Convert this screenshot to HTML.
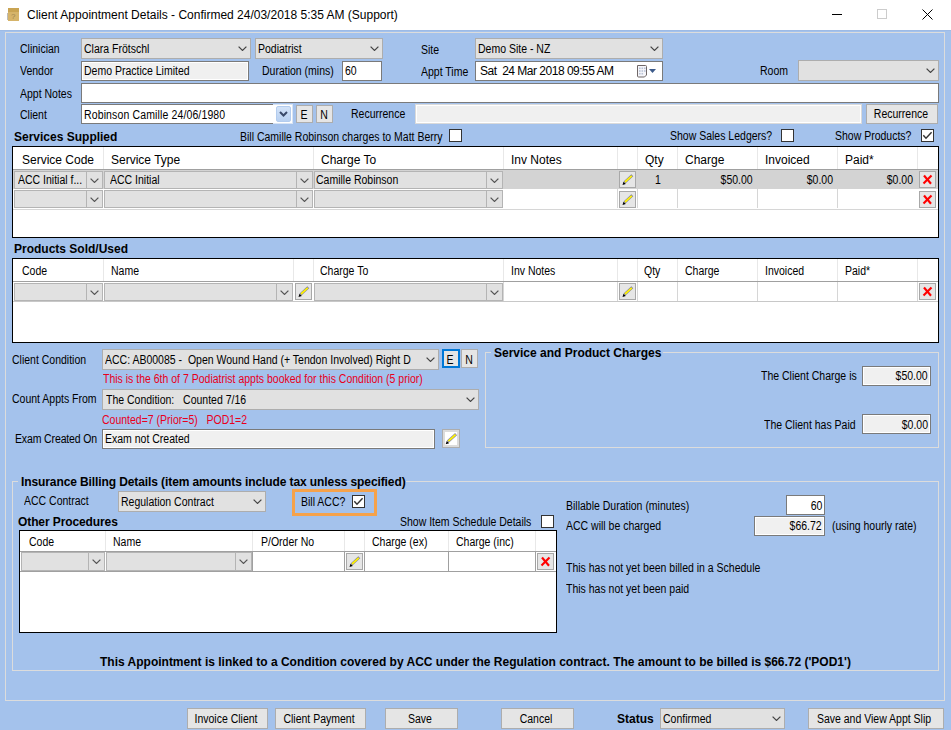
<!DOCTYPE html>
<html><head><meta charset="utf-8"><style>
html,body{margin:0;padding:0;width:951px;height:730px;overflow:hidden;background:#A4C2EC}
.a{position:absolute}
.t{position:absolute;white-space:pre;font-family:"Liberation Sans",sans-serif;font-size:12px;line-height:12px;color:#000}
.r{transform:scaleX(0.875);transform-origin:0 0}
.rr{transform:scaleX(0.875);transform-origin:100% 0}
.rc{transform:scaleX(0.875);transform-origin:50% 0}
.h{letter-spacing:0}
.ti{letter-spacing:0;color:#000}
.dt{letter-spacing:-0.5px}
.b{font-weight:bold;letter-spacing:0}
</style></head><body>
<div class="a" style="left:0px;top:0px;width:951px;height:30px;background:#fff"></div>
<svg class="a" style="left:7px;top:7px" width="14" height="15" viewBox="0 0 14 15"><rect x="1" y="2" width="11" height="12" fill="#D6B46A"/><rect x="1" y="1" width="11" height="4" fill="#C9A453"/><rect x="0" y="6" width="1" height="7" fill="#bbb"/><text x="4" y="12" font-size="8" fill="#9c8550" font-family="Liberation Sans">?</text></svg>
<div class="t ti" style="left:27px;top:9px;">Client Appointment Details - Confirmed 24/03/2018 5:35 AM (Support)</div>
<div class="a" style="left:832px;top:14px;width:10px;height:1px;background:#000"></div>
<div class="a" style="left:877px;top:9px;width:10px;height:10px;border:1px solid #ccc;box-sizing:border-box"></div>
<svg class="a" style="left:922px;top:9px" width="11" height="11" viewBox="0 0 11 11"><line x1="0.5" y1="0.5" x2="10.5" y2="10.5" stroke="#000" stroke-width="1"/><line x1="10.5" y1="0.5" x2="0.5" y2="10.5" stroke="#000" stroke-width="1"/></svg>
<div class="a" style="left:0px;top:30px;width:951px;height:700px;background:#A4C2EC"></div>
<div class="a" style="left:0px;top:30px;width:951px;height:1px;background:#9DBBE6"></div>
<div class="a" style="left:5px;top:32px;width:940px;height:669px;border:1px solid #DCDCDC;box-sizing:border-box"></div>
<div class="t r" style="left:20px;top:43px;">Clinician</div>
<div class="a" style="left:81px;top:38px;width:170px;height:21px;background:#E1E1E1;border:1px solid #ADADAD;box-sizing:border-box"></div>
<svg width="9" height="5" viewBox="0 0 9 5" style="position:absolute;left:238px;top:46px"><polyline points="0.6,0.6 4.5,4.4 8.4,0.6" fill="none" stroke="#444" stroke-width="1.25"/></svg>
<div class="t r" style="left:84px;top:43px;">Clara Frötschl</div>
<div class="a" style="left:255px;top:38px;width:128px;height:21px;background:#E1E1E1;border:1px solid #ADADAD;box-sizing:border-box"></div>
<svg width="9" height="5" viewBox="0 0 9 5" style="position:absolute;left:370px;top:46px"><polyline points="0.6,0.6 4.5,4.4 8.4,0.6" fill="none" stroke="#444" stroke-width="1.25"/></svg>
<div class="t r" style="left:258px;top:43px;">Podiatrist</div>
<div class="t r" style="left:421px;top:44px;">Site</div>
<div class="a" style="left:475px;top:38px;width:188px;height:21px;background:#E1E1E1;border:1px solid #ADADAD;box-sizing:border-box"></div>
<svg width="9" height="5" viewBox="0 0 9 5" style="position:absolute;left:650px;top:46px"><polyline points="0.6,0.6 4.5,4.4 8.4,0.6" fill="none" stroke="#444" stroke-width="1.25"/></svg>
<div class="t r" style="left:478px;top:43px;">Demo Site - NZ</div>
<div class="t r" style="left:20px;top:65px;">Vendor</div>
<div class="a" style="left:81px;top:61px;width:168px;height:20px;background:#F0F0F0;border:1px solid #7A7A7A;box-sizing:border-box;box-shadow:inset 0 0 0 1px #fff"></div>
<div class="t r" style="left:84px;top:65px;">Demo Practice Limited</div>
<div class="t r" style="left:262px;top:65px;">Duration (mins)</div>
<div class="a" style="left:342px;top:61px;width:40px;height:20px;background:#fff;border:1px solid #7A7A7A;box-sizing:border-box;box-shadow:inset 0 0 0 1px #fff"></div>
<div class="t r" style="left:345px;top:65px;">60</div>
<div class="t r" style="left:421px;top:66px;">Appt Time</div>
<div class="a" style="left:475px;top:61px;width:188px;height:20px;background:#fff;border:1px solid #7A7A7A;box-sizing:border-box;box-shadow:inset 0 0 0 1px #fff"></div>
<div class="t dt" style="left:480px;top:65px;">Sat  24 Mar 2018 09:55 AM</div>
<svg class="a" style="left:636px;top:64px" width="22" height="14" viewBox="0 0 22 14"><path d="M1.5,1.5 h8 q1,0 1,1 v8.5 l-2,2 h-6 q-1,0 -1,-1 z" fill="#F6F6FA" stroke="#6E6666"/><rect x="3" y="3.5" width="1.6" height="1.6" fill="#B8C2D6"/><rect x="5.5" y="3.5" width="1.6" height="1.6" fill="#B8C2D6"/><rect x="8" y="3.5" width="1.6" height="1.6" fill="#B8C2D6"/><rect x="3" y="6.2" width="1.6" height="1.6" fill="#B8C2D6"/><rect x="5.5" y="6.2" width="1.6" height="1.6" fill="#B8C2D6"/><rect x="8" y="6.2" width="1.6" height="1.6" fill="#B8C2D6"/><rect x="3" y="8.9" width="1.6" height="1.6" fill="#B8C2D6"/><rect x="5.5" y="8.9" width="1.6" height="1.6" fill="#B8C2D6"/><polygon points="13,5 20,5 16.5,9" fill="#3c5a8a"/></svg>
<div class="t r" style="left:760px;top:65px;">Room</div>
<div class="a" style="left:798px;top:60px;width:141px;height:21px;background:#E1E1E1;border:1px solid #ADADAD;box-sizing:border-box"></div>
<svg width="9" height="5" viewBox="0 0 9 5" style="position:absolute;left:926px;top:68px"><polyline points="0.6,0.6 4.5,4.4 8.4,0.6" fill="none" stroke="#444" stroke-width="1.25"/></svg>
<div class="t r" style="left:20px;top:88px;">Appt Notes</div>
<div class="a" style="left:81px;top:83px;width:858px;height:20px;background:#fff;border:1px solid #7A7A7A;box-sizing:border-box;box-shadow:inset 0 0 0 1px #fff"></div>
<div class="t r" style="left:20px;top:109px;">Client</div>
<div class="a" style="left:81px;top:104px;width:212px;height:20px;background:#fff;border:1px solid #7A7A7A;box-sizing:border-box;box-shadow:inset 0 0 0 1px #fff"></div>
<div class="a" style="left:273px;top:104px;width:20px;height:20px;background:#fff;border:1px solid #D8E4F4;border-left:none;box-sizing:border-box"></div>
<div class="t r" style="left:84px;top:109px;letter-spacing:0.15px">Robinson Camille 24/06/1980</div>
<div class="a" style="left:276px;top:106px;width:15px;height:16px;background:linear-gradient(#D3E3F8,#B9D1F1);border:1px solid #B3CCEE;border-radius:2px;box-sizing:border-box"></div>
<svg class="a" style="left:279px;top:111px" width="9" height="6" viewBox="0 0 9 6"><polyline points="1,1 4.5,4.5 8,1" fill="none" stroke="#3A4A6A" stroke-width="2"/></svg>
<div class="a" style="left:296px;top:105px;width:17px;height:18px;background:#E5E5E5;border:1px solid #ADADAD;box-sizing:border-box"></div>
<div class="t rc" style="left:153.5px;width:300px;text-align:center;top:109px">E</div>
<div class="a" style="left:316px;top:105px;width:17px;height:18px;background:#E5E5E5;border:1px solid #ADADAD;box-sizing:border-box"></div>
<div class="t rc" style="left:173.5px;width:300px;text-align:center;top:109px">N</div>
<div class="t r" style="left:351px;top:108px;">Recurrence</div>
<div class="a" style="left:415px;top:104px;width:447px;height:20px;background:#F0F0F0;border:1px solid #DADADA;box-sizing:border-box;box-shadow:inset 0 0 0 1px #fff"></div>
<div class="a" style="left:866px;top:104px;width:72px;height:20px;background:#E5E5E5;border:1px solid #ADADAD;box-sizing:border-box"></div>
<div class="t rc" style="left:751.0px;width:300px;text-align:center;top:108px">Recurrence</div>
<div class="t b" style="left:14px;top:131px;">Services Supplied</div>
<div class="t r" style="left:240px;top:131px;">Bill Camille Robinson charges to Matt Berry</div>
<div class="a" style="left:449px;top:129px;width:13px;height:13px;background:#fff;border:1px solid #333;box-sizing:border-box"></div>
<div class="t r" style="left:670px;top:130px;">Show Sales Ledgers?</div>
<div class="a" style="left:781px;top:129px;width:13px;height:13px;background:#fff;border:1px solid #333;box-sizing:border-box"></div>
<div class="t r" style="left:835px;top:130px;">Show Products?</div>
<div class="a" style="left:921px;top:129px;width:13px;height:13px;background:#fff;border:1px solid #333;box-sizing:border-box"></div>
<svg class="a" style="left:921px;top:129px" width="13" height="13" viewBox="0 0 13 13"><polyline points="2.3,6.3 5,9.2 10.6,3.3" fill="none" stroke="#333" stroke-width="1.45"/></svg>
<div class="a" style="left:12px;top:146px;width:927px;height:92px;background:#fff;border:1px solid #000;box-sizing:border-box"></div>
<div class="a" style="left:13px;top:169px;width:925px;height:1px;background:#A0A0A0"></div>
<div class="a" style="left:103px;top:147px;width:1px;height:22px;background:#E8E8E8"></div>
<div class="a" style="left:313px;top:147px;width:1px;height:22px;background:#E8E8E8"></div>
<div class="a" style="left:503px;top:147px;width:1px;height:22px;background:#E8E8E8"></div>
<div class="a" style="left:617px;top:147px;width:1px;height:22px;background:#E8E8E8"></div>
<div class="a" style="left:637px;top:147px;width:1px;height:22px;background:#E8E8E8"></div>
<div class="a" style="left:677px;top:147px;width:1px;height:22px;background:#E8E8E8"></div>
<div class="a" style="left:757px;top:147px;width:1px;height:22px;background:#E8E8E8"></div>
<div class="a" style="left:837px;top:147px;width:1px;height:22px;background:#E8E8E8"></div>
<div class="a" style="left:917px;top:147px;width:1px;height:22px;background:#E8E8E8"></div>
<div class="a" style="left:13px;top:170px;width:925px;height:19px;background:#D3D3D3"></div>
<div class="a" style="left:13px;top:209px;width:925px;height:1px;background:#D6D6D6"></div>
<div class="a" style="left:617px;top:189px;width:1px;height:19px;background:#D6D6D6"></div>
<div class="a" style="left:637px;top:189px;width:1px;height:19px;background:#D6D6D6"></div>
<div class="a" style="left:677px;top:189px;width:1px;height:19px;background:#D6D6D6"></div>
<div class="a" style="left:757px;top:189px;width:1px;height:19px;background:#D6D6D6"></div>
<div class="a" style="left:837px;top:189px;width:1px;height:19px;background:#D6D6D6"></div>
<div class="a" style="left:14px;top:171px;width:89px;height:18px;background:#E1E1E1;border:1px solid #B4B4B4;box-sizing:border-box"></div>
<div class="a" style="left:86px;top:171px;width:1px;height:18px;background:#B4B4B4"></div>
<svg width="9" height="5" viewBox="0 0 9 5" style="position:absolute;left:90px;top:178px"><polyline points="0.6,0.6 4.5,4.4 8.4,0.6" fill="none" stroke="#555" stroke-width="1.25"/></svg>
<div class="t r" style="left:18px;top:174px;">ACC Initial f...</div>
<div class="a" style="left:104px;top:171px;width:209px;height:18px;background:#E1E1E1;border:1px solid #B4B4B4;box-sizing:border-box"></div>
<div class="a" style="left:296px;top:171px;width:1px;height:18px;background:#B4B4B4"></div>
<svg width="9" height="5" viewBox="0 0 9 5" style="position:absolute;left:300px;top:178px"><polyline points="0.6,0.6 4.5,4.4 8.4,0.6" fill="none" stroke="#555" stroke-width="1.25"/></svg>
<div class="t r" style="left:110px;top:174px;">ACC Initial</div>
<div class="a" style="left:314px;top:171px;width:189px;height:18px;background:#E1E1E1;border:1px solid #B4B4B4;box-sizing:border-box"></div>
<div class="a" style="left:486px;top:171px;width:1px;height:18px;background:#B4B4B4"></div>
<svg width="9" height="5" viewBox="0 0 9 5" style="position:absolute;left:490px;top:178px"><polyline points="0.6,0.6 4.5,4.4 8.4,0.6" fill="none" stroke="#555" stroke-width="1.25"/></svg>
<div class="t r" style="left:316px;top:174px;">Camille Robinson</div>
<div class="a" style="left:619px;top:171px;width:17px;height:17px;background:#E6E6E6;border:1px solid #A8A8A8;box-sizing:border-box"></div>
<svg class="a" style="left:619px;top:171px" width="17" height="17" viewBox="0 0 17 17"><line x1="5.5" y1="11.5" x2="13.3" y2="4.3" stroke="#3a3a70" stroke-width="2.8" stroke-opacity="0.6"/><line x1="6" y1="11" x2="12.8" y2="4.8" stroke="#FFF200" stroke-width="1.7"/><polygon points="3.5,14 4.5,10.8 6.8,13" fill="#000"/></svg>
<div class="a" style="left:919px;top:171px;width:17px;height:17px;background:#E6E6E6;border:1px solid #A8A8A8;box-sizing:border-box"></div>
<svg class="a" style="left:919px;top:171px" width="17" height="17" viewBox="0 0 17 17"><line x1="5" y1="4.5" x2="12" y2="12.8" stroke="#FF0000" stroke-width="2.1"/><line x1="12.5" y1="4.5" x2="4.5" y2="12.5" stroke="#FF0000" stroke-width="2.1"/></svg>
<div class="a" style="left:14px;top:190px;width:89px;height:18px;background:#E1E1E1;border:1px solid #B4B4B4;box-sizing:border-box"></div>
<div class="a" style="left:86px;top:190px;width:1px;height:18px;background:#B4B4B4"></div>
<svg width="9" height="5" viewBox="0 0 9 5" style="position:absolute;left:90px;top:197px"><polyline points="0.6,0.6 4.5,4.4 8.4,0.6" fill="none" stroke="#555" stroke-width="1.25"/></svg>
<div class="a" style="left:104px;top:190px;width:209px;height:18px;background:#E1E1E1;border:1px solid #B4B4B4;box-sizing:border-box"></div>
<div class="a" style="left:296px;top:190px;width:1px;height:18px;background:#B4B4B4"></div>
<svg width="9" height="5" viewBox="0 0 9 5" style="position:absolute;left:300px;top:197px"><polyline points="0.6,0.6 4.5,4.4 8.4,0.6" fill="none" stroke="#555" stroke-width="1.25"/></svg>
<div class="a" style="left:314px;top:190px;width:189px;height:18px;background:#E1E1E1;border:1px solid #B4B4B4;box-sizing:border-box"></div>
<div class="a" style="left:486px;top:190px;width:1px;height:18px;background:#B4B4B4"></div>
<svg width="9" height="5" viewBox="0 0 9 5" style="position:absolute;left:490px;top:197px"><polyline points="0.6,0.6 4.5,4.4 8.4,0.6" fill="none" stroke="#555" stroke-width="1.25"/></svg>
<div class="a" style="left:619px;top:191px;width:17px;height:17px;background:#E6E6E6;border:1px solid #A8A8A8;box-sizing:border-box"></div>
<svg class="a" style="left:619px;top:191px" width="17" height="17" viewBox="0 0 17 17"><line x1="5.5" y1="11.5" x2="13.3" y2="4.3" stroke="#3a3a70" stroke-width="2.8" stroke-opacity="0.6"/><line x1="6" y1="11" x2="12.8" y2="4.8" stroke="#FFF200" stroke-width="1.7"/><polygon points="3.5,14 4.5,10.8 6.8,13" fill="#000"/></svg>
<div class="a" style="left:919px;top:191px;width:17px;height:17px;background:#E6E6E6;border:1px solid #A8A8A8;box-sizing:border-box"></div>
<svg class="a" style="left:919px;top:191px" width="17" height="17" viewBox="0 0 17 17"><line x1="5" y1="4.5" x2="12" y2="12.8" stroke="#FF0000" stroke-width="2.1"/><line x1="12.5" y1="4.5" x2="4.5" y2="12.5" stroke="#FF0000" stroke-width="2.1"/></svg>
<div class="t r" style="left:655px;top:174px;">1</div>
<div class="t rr" style="right:198px;top:174px;">$50.00</div>
<div class="t rr" style="right:118px;top:174px;">$0.00</div>
<div class="t rr" style="right:38px;top:174px;">$0.00</div>
<div class="t h" style="left:22px;top:154px;">Service Code</div>
<div class="t h" style="left:111px;top:154px;">Service Type</div>
<div class="t h" style="left:321px;top:154px;">Charge To</div>
<div class="t h" style="left:511px;top:154px;">Inv Notes</div>
<div class="t h" style="left:645px;top:154px;">Qty</div>
<div class="t h" style="left:685px;top:154px;">Charge</div>
<div class="t h" style="left:765px;top:154px;">Invoiced</div>
<div class="t h" style="left:845px;top:154px;">Paid*</div>
<div class="t b" style="left:14px;top:243px;">Products Sold/Used</div>
<div class="a" style="left:12px;top:258px;width:927px;height:85px;background:#fff;border:1px solid #000;box-sizing:border-box"></div>
<div class="a" style="left:13px;top:281px;width:925px;height:1px;background:#A0A0A0"></div>
<div class="a" style="left:103px;top:259px;width:1px;height:22px;background:#E8E8E8"></div>
<div class="a" style="left:293px;top:259px;width:1px;height:22px;background:#E8E8E8"></div>
<div class="a" style="left:313px;top:259px;width:1px;height:22px;background:#E8E8E8"></div>
<div class="a" style="left:503px;top:259px;width:1px;height:22px;background:#E8E8E8"></div>
<div class="a" style="left:617px;top:259px;width:1px;height:22px;background:#E8E8E8"></div>
<div class="a" style="left:637px;top:259px;width:1px;height:22px;background:#E8E8E8"></div>
<div class="a" style="left:677px;top:259px;width:1px;height:22px;background:#E8E8E8"></div>
<div class="a" style="left:757px;top:259px;width:1px;height:22px;background:#E8E8E8"></div>
<div class="a" style="left:837px;top:259px;width:1px;height:22px;background:#E8E8E8"></div>
<div class="a" style="left:917px;top:259px;width:1px;height:22px;background:#E8E8E8"></div>
<div class="a" style="left:13px;top:301px;width:925px;height:1px;background:#C8C8C8"></div>
<div class="a" style="left:503px;top:282px;width:1px;height:19px;background:#D6D6D6"></div>
<div class="a" style="left:617px;top:282px;width:1px;height:19px;background:#D6D6D6"></div>
<div class="a" style="left:637px;top:282px;width:1px;height:19px;background:#D6D6D6"></div>
<div class="a" style="left:677px;top:282px;width:1px;height:19px;background:#D6D6D6"></div>
<div class="a" style="left:757px;top:282px;width:1px;height:19px;background:#D6D6D6"></div>
<div class="a" style="left:837px;top:282px;width:1px;height:19px;background:#D6D6D6"></div>
<div class="a" style="left:917px;top:282px;width:1px;height:19px;background:#D6D6D6"></div>
<div class="a" style="left:14px;top:283px;width:89px;height:18px;background:#E1E1E1;border:1px solid #B4B4B4;box-sizing:border-box"></div>
<div class="a" style="left:86px;top:283px;width:1px;height:18px;background:#B4B4B4"></div>
<svg width="9" height="5" viewBox="0 0 9 5" style="position:absolute;left:90px;top:290px"><polyline points="0.6,0.6 4.5,4.4 8.4,0.6" fill="none" stroke="#555" stroke-width="1.25"/></svg>
<div class="a" style="left:104px;top:283px;width:189px;height:18px;background:#E1E1E1;border:1px solid #B4B4B4;box-sizing:border-box"></div>
<div class="a" style="left:276px;top:283px;width:1px;height:18px;background:#B4B4B4"></div>
<svg width="9" height="5" viewBox="0 0 9 5" style="position:absolute;left:280px;top:290px"><polyline points="0.6,0.6 4.5,4.4 8.4,0.6" fill="none" stroke="#555" stroke-width="1.25"/></svg>
<div class="a" style="left:295px;top:283px;width:17px;height:17px;background:#E6E6E6;border:1px solid #A8A8A8;box-sizing:border-box"></div>
<svg class="a" style="left:295px;top:283px" width="17" height="17" viewBox="0 0 17 17"><line x1="5.5" y1="11.5" x2="13.3" y2="4.3" stroke="#3a3a70" stroke-width="2.8" stroke-opacity="0.6"/><line x1="6" y1="11" x2="12.8" y2="4.8" stroke="#FFF200" stroke-width="1.7"/><polygon points="3.5,14 4.5,10.8 6.8,13" fill="#000"/></svg>
<div class="a" style="left:314px;top:283px;width:189px;height:18px;background:#E1E1E1;border:1px solid #B4B4B4;box-sizing:border-box"></div>
<div class="a" style="left:486px;top:283px;width:1px;height:18px;background:#B4B4B4"></div>
<svg width="9" height="5" viewBox="0 0 9 5" style="position:absolute;left:490px;top:290px"><polyline points="0.6,0.6 4.5,4.4 8.4,0.6" fill="none" stroke="#555" stroke-width="1.25"/></svg>
<div class="a" style="left:619px;top:283px;width:17px;height:17px;background:#E6E6E6;border:1px solid #A8A8A8;box-sizing:border-box"></div>
<svg class="a" style="left:619px;top:283px" width="17" height="17" viewBox="0 0 17 17"><line x1="5.5" y1="11.5" x2="13.3" y2="4.3" stroke="#3a3a70" stroke-width="2.8" stroke-opacity="0.6"/><line x1="6" y1="11" x2="12.8" y2="4.8" stroke="#FFF200" stroke-width="1.7"/><polygon points="3.5,14 4.5,10.8 6.8,13" fill="#000"/></svg>
<div class="a" style="left:919px;top:283px;width:17px;height:17px;background:#E6E6E6;border:1px solid #A8A8A8;box-sizing:border-box"></div>
<svg class="a" style="left:919px;top:283px" width="17" height="17" viewBox="0 0 17 17"><line x1="5" y1="4.5" x2="12" y2="12.8" stroke="#FF0000" stroke-width="2.1"/><line x1="12.5" y1="4.5" x2="4.5" y2="12.5" stroke="#FF0000" stroke-width="2.1"/></svg>
<div class="t r" style="left:22px;top:265px;">Code</div>
<div class="t r" style="left:111px;top:265px;">Name</div>
<div class="t r" style="left:320px;top:265px;">Charge To</div>
<div class="t r" style="left:511px;top:265px;">Inv Notes</div>
<div class="t r" style="left:644px;top:265px;">Qty</div>
<div class="t r" style="left:685px;top:265px;">Charge</div>
<div class="t r" style="left:765px;top:265px;">Invoiced</div>
<div class="t r" style="left:845px;top:265px;">Paid*</div>
<div class="t r" style="left:12px;top:354px;">Client Condition</div>
<div class="a" style="left:102px;top:349px;width:337px;height:21px;background:#E1E1E1;border:1px solid #ADADAD;box-sizing:border-box"></div>
<svg width="9" height="5" viewBox="0 0 9 5" style="position:absolute;left:426px;top:357px"><polyline points="0.6,0.6 4.5,4.4 8.4,0.6" fill="none" stroke="#444" stroke-width="1.25"/></svg>
<div class="t r" style="left:105px;top:354px;">ACC: AB00085 -  Open Wound Hand (+ Tendon Involved) Right D</div>
<div class="a" style="left:442px;top:349px;width:18px;height:19px;background:#E5E5E5;border:1px solid #0078D7;box-sizing:border-box"></div>
<div class="t rc" style="left:300.0px;width:300px;text-align:center;top:354px">E</div>
<div class="a" style="left:443px;top:350px;width:16px;height:17px;border:1px solid #0078D7;box-sizing:border-box"></div>
<div class="a" style="left:461px;top:349px;width:17px;height:19px;background:#E5E5E5;border:1px solid #ADADAD;box-sizing:border-box"></div>
<div class="t rc" style="left:318.5px;width:300px;text-align:center;top:354px">N</div>
<div class="t r" style="left:103px;top:373px;color:#E8001C;">This is the 6th of 7 Podiatrist appts booked for this Condition (5 prior)</div>
<div class="t r" style="left:12px;top:393px;">Count Appts From</div>
<div class="a" style="left:102px;top:389px;width:377px;height:21px;background:#E1E1E1;border:1px solid #ADADAD;box-sizing:border-box"></div>
<svg width="9" height="5" viewBox="0 0 9 5" style="position:absolute;left:466px;top:397px"><polyline points="0.6,0.6 4.5,4.4 8.4,0.6" fill="none" stroke="#444" stroke-width="1.25"/></svg>
<div class="t r" style="left:106px;top:394px;">The Condition:   Counted 7/16</div>
<div class="t r" style="left:102px;top:414px;color:#E8001C;">Counted=7 (Prior=5)   POD1=2</div>
<div class="t r" style="left:15px;top:433px;letter-spacing:-0.15px">Exam Created On</div>
<div class="a" style="left:102px;top:429px;width:333px;height:20px;background:#F0F0F0;border:1px solid #7A7A7A;box-sizing:border-box;box-shadow:inset 0 0 0 1px #fff"></div>
<div class="t r" style="left:105px;top:433px;">Exam not Created</div>
<div class="a" style="left:442px;top:429px;width:18px;height:19px;background:#fff;border:1px solid #ADADAD;box-sizing:border-box;box-shadow:inset 0 0 0 2px #DCDCDC"></div>
<svg class="a" style="left:442px;top:429px" width="18" height="19" viewBox="0 0 17 17"><line x1="5.5" y1="11.5" x2="13.3" y2="4.3" stroke="#3a3a70" stroke-width="2.8" stroke-opacity="0.6"/><line x1="6" y1="11" x2="12.8" y2="4.8" stroke="#FFF200" stroke-width="1.7"/><polygon points="3.5,14 4.5,10.8 6.8,13" fill="#000"/></svg>
<div class="a" style="left:485px;top:352px;width:454px;height:96px;border:1px solid #DCDCDC;box-sizing:border-box"></div>
<div class="a" style="left:491px;top:345px;width:172px;height:12px;background:#A4C2EC"></div>
<div class="t b" style="left:494px;top:347px;">Service and Product Charges</div>
<div class="t r" style="left:761px;top:370px;">The Client Charge is</div>
<div class="a" style="left:862px;top:366px;width:69px;height:20px;background:#F0F0F0;border:1px solid #7A7A7A;box-sizing:border-box;box-shadow:inset 0 0 0 1px #fff"></div>
<div class="t rr" style="right:23px;top:370px;">$50.00</div>
<div class="t r" style="left:764px;top:419px;">The Client has Paid</div>
<div class="a" style="left:862px;top:414px;width:69px;height:20px;background:#F0F0F0;border:1px solid #7A7A7A;box-sizing:border-box;box-shadow:inset 0 0 0 1px #fff"></div>
<div class="t rr" style="right:23px;top:419px;">$0.00</div>
<div class="a" style="left:12px;top:481px;width:927px;height:190px;border:1px solid #DCDCDC;box-sizing:border-box"></div>
<div class="a" style="left:18px;top:474px;width:388px;height:12px;background:#A4C2EC"></div>
<div class="t b" style="left:21px;top:476px;letter-spacing:-0.1px">Insurance Billing Details (item amounts include tax unless specified)</div>
<div class="t r" style="left:24px;top:495px;">ACC Contract</div>
<div class="a" style="left:118px;top:491px;width:148px;height:21px;background:#E1E1E1;border:1px solid #ADADAD;box-sizing:border-box"></div>
<svg width="9" height="5" viewBox="0 0 9 5" style="position:absolute;left:253px;top:499px"><polyline points="0.6,0.6 4.5,4.4 8.4,0.6" fill="none" stroke="#444" stroke-width="1.25"/></svg>
<div class="t r" style="left:121px;top:496px;">Regulation Contract</div>
<div class="a" style="left:292px;top:489px;width:85px;height:27px;border:3px solid #F6A24A;box-sizing:border-box"></div>
<div class="t r" style="left:301px;top:496px;">Bill ACC?</div>
<div class="a" style="left:352px;top:495px;width:13px;height:13px;background:#fff;border:1px solid #333;box-sizing:border-box"></div>
<svg class="a" style="left:352px;top:495px" width="13" height="13" viewBox="0 0 13 13"><polyline points="2.3,6.3 5,9.2 10.6,3.3" fill="none" stroke="#333" stroke-width="1.45"/></svg>
<div class="t b" style="left:18px;top:516px;letter-spacing:-0.1px">Other Procedures</div>
<div class="t r" style="left:400px;top:516px;">Show Item Schedule Details</div>
<div class="a" style="left:541px;top:515px;width:13px;height:13px;background:#fff;border:1px solid #333;box-sizing:border-box"></div>
<div class="a" style="left:19px;top:530px;width:538px;height:103px;background:#fff;border:1px solid #000;box-sizing:border-box"></div>
<div class="a" style="left:20px;top:551px;width:536px;height:1px;background:#A0A0A0"></div>
<div class="a" style="left:105px;top:531px;width:1px;height:20px;background:#E8E8E8"></div>
<div class="a" style="left:252px;top:531px;width:1px;height:20px;background:#E8E8E8"></div>
<div class="a" style="left:344px;top:531px;width:1px;height:20px;background:#E8E8E8"></div>
<div class="a" style="left:364px;top:531px;width:1px;height:20px;background:#E8E8E8"></div>
<div class="a" style="left:448px;top:531px;width:1px;height:20px;background:#E8E8E8"></div>
<div class="a" style="left:535px;top:531px;width:1px;height:20px;background:#E8E8E8"></div>
<div class="a" style="left:20px;top:571px;width:536px;height:1px;background:#A0A0A0"></div>
<div class="a" style="left:252px;top:552px;width:1px;height:19px;background:#A0A0A0"></div>
<div class="a" style="left:344px;top:552px;width:1px;height:19px;background:#A0A0A0"></div>
<div class="a" style="left:364px;top:552px;width:1px;height:19px;background:#A0A0A0"></div>
<div class="a" style="left:448px;top:552px;width:1px;height:19px;background:#A0A0A0"></div>
<div class="a" style="left:535px;top:552px;width:1px;height:19px;background:#A0A0A0"></div>
<div class="a" style="left:21px;top:552px;width:84px;height:19px;background:#E1E1E1;border:1px solid #B4B4B4;box-sizing:border-box"></div>
<div class="a" style="left:88px;top:552px;width:1px;height:19px;background:#B4B4B4"></div>
<svg width="9" height="5" viewBox="0 0 9 5" style="position:absolute;left:92px;top:559px"><polyline points="0.6,0.6 4.5,4.4 8.4,0.6" fill="none" stroke="#555" stroke-width="1.25"/></svg>
<div class="a" style="left:106px;top:552px;width:146px;height:19px;background:#E1E1E1;border:1px solid #B4B4B4;box-sizing:border-box"></div>
<div class="a" style="left:235px;top:552px;width:1px;height:19px;background:#B4B4B4"></div>
<svg width="9" height="5" viewBox="0 0 9 5" style="position:absolute;left:239px;top:559px"><polyline points="0.6,0.6 4.5,4.4 8.4,0.6" fill="none" stroke="#555" stroke-width="1.25"/></svg>
<div class="a" style="left:346px;top:553px;width:17px;height:17px;background:#E6E6E6;border:1px solid #A8A8A8;box-sizing:border-box"></div>
<svg class="a" style="left:346px;top:553px" width="17" height="17" viewBox="0 0 17 17"><line x1="5.5" y1="11.5" x2="13.3" y2="4.3" stroke="#3a3a70" stroke-width="2.8" stroke-opacity="0.6"/><line x1="6" y1="11" x2="12.8" y2="4.8" stroke="#FFF200" stroke-width="1.7"/><polygon points="3.5,14 4.5,10.8 6.8,13" fill="#000"/></svg>
<div class="a" style="left:537px;top:553px;width:17px;height:17px;background:#E6E6E6;border:1px solid #A8A8A8;box-sizing:border-box"></div>
<svg class="a" style="left:537px;top:553px" width="17" height="17" viewBox="0 0 17 17"><line x1="5" y1="4.5" x2="12" y2="12.8" stroke="#FF0000" stroke-width="2.1"/><line x1="12.5" y1="4.5" x2="4.5" y2="12.5" stroke="#FF0000" stroke-width="2.1"/></svg>
<div class="t r" style="left:29px;top:536px;">Code</div>
<div class="t r" style="left:113px;top:536px;">Name</div>
<div class="t r" style="left:261px;top:536px;">P/Order No</div>
<div class="t r" style="left:372px;top:536px;">Charge (ex)</div>
<div class="t r" style="left:456px;top:536px;">Charge (inc)</div>
<div class="t r" style="left:566px;top:500px;">Billable Duration (minutes)</div>
<div class="a" style="left:786px;top:495px;width:39px;height:20px;background:#fff;border:1px solid #7A7A7A;box-sizing:border-box;box-shadow:inset 0 0 0 1px #fff"></div>
<div class="t rr" style="right:129px;top:500px;">60</div>
<div class="t r" style="left:566px;top:520px;">ACC will be charged</div>
<div class="a" style="left:754px;top:516px;width:71px;height:20px;background:#F0F0F0;border:1px solid #7A7A7A;box-sizing:border-box;box-shadow:inset 0 0 0 1px #fff"></div>
<div class="t rr" style="right:129px;top:520px;">$66.72</div>
<div class="t r" style="left:832px;top:520px;">(using hourly rate)</div>
<div class="t r" style="left:566px;top:562px;">This has not yet been billed in a Schedule</div>
<div class="t r" style="left:566px;top:583px;">This has not yet been paid</div>
<div class="t b" style="left:100px;top:656px;">This Appointment is linked to a Condition covered by ACC under the Regulation contract. The amount to be billed is $66.72 ('POD1')</div>
<div class="a" style="left:187px;top:708px;width:81px;height:21px;background:#E5E5E5;border:1px solid #ADADAD;box-sizing:border-box"></div>
<div class="t rc" style="left:75.5px;width:300px;text-align:center;top:713px">Invoice Client</div>
<div class="a" style="left:275px;top:708px;width:91px;height:21px;background:#E5E5E5;border:1px solid #ADADAD;box-sizing:border-box"></div>
<div class="t rc" style="left:168.5px;width:300px;text-align:center;top:713px">Client Payment</div>
<div class="a" style="left:385px;top:708px;width:73px;height:21px;background:#E5E5E5;border:1px solid #ADADAD;box-sizing:border-box"></div>
<div class="t rc" style="left:269.5px;width:300px;text-align:center;top:713px">Save</div>
<div class="a" style="left:501px;top:708px;width:73px;height:21px;background:#E5E5E5;border:1px solid #ADADAD;box-sizing:border-box"></div>
<div class="t rc" style="left:385.5px;width:300px;text-align:center;top:713px">Cancel</div>
<div class="t b" style="left:617px;top:713px;">Status</div>
<div class="a" style="left:660px;top:708px;width:125px;height:21px;background:#E1E1E1;border:1px solid #ADADAD;box-sizing:border-box"></div>
<svg width="9" height="5" viewBox="0 0 9 5" style="position:absolute;left:772px;top:716px"><polyline points="0.6,0.6 4.5,4.4 8.4,0.6" fill="none" stroke="#444" stroke-width="1.25"/></svg>
<div class="t r" style="left:663px;top:713px;">Confirmed</div>
<div class="a" style="left:808px;top:708px;width:136px;height:21px;background:#E5E5E5;border:1px solid #ADADAD;box-sizing:border-box"></div>
<div class="t rc" style="left:724.0px;width:300px;text-align:center;top:713px">Save and View Appt Slip</div>
</body></html>
